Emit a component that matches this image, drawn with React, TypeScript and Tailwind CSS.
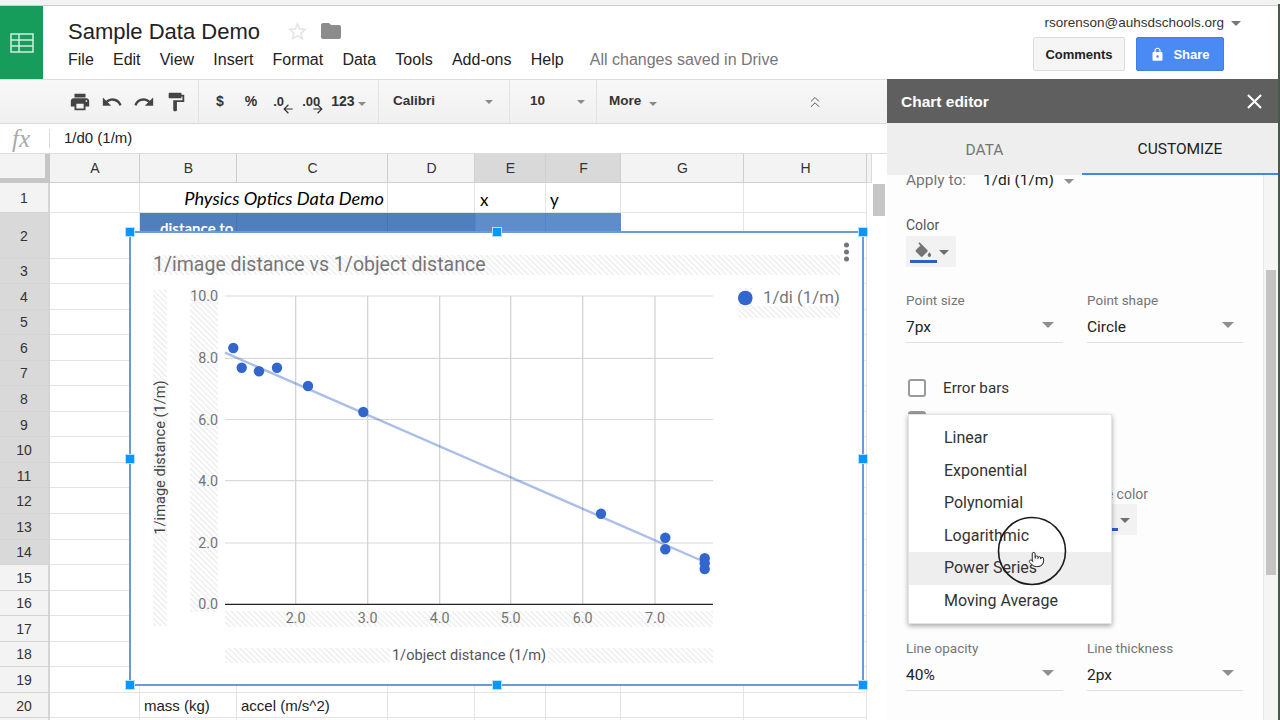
import { MdPrint, MdUndo, MdRedo, MdFormatPaint, MdLock, MdClose, MdStarBorder, MdFolder, MdArrowBack, MdArrowForward } from 'react-icons/md'
import { ChevronsUp, Pointer } from 'lucide-react'

const columns = ['A', 'B', 'C', 'D', 'E', 'F', 'G', 'H']
const rowNumbers = Array.from({ length: 21 }, (_, i) => i + 1)

const points = [
  [233.3, 348], [241.7, 367.7], [259, 371.3], [277, 367.7], [308, 386], [363.3, 412],
  [601, 513.7], [665.3, 537.7], [665.3, 549.3], [704.7, 558.3], [704.7, 563.3], [704.7, 569],
]
const yTicks = [['10.0', 296], ['8.0', 358.3], ['6.0', 419.5], ['4.0', 480.7], ['2.0', 543]] as const
const xTicks = [['2.0', 295.7], ['3.0', 367.7], ['4.0', 439.7], ['5.0', 510.7], ['6.0', 582.7], ['7.0', 655]] as const
const trendTypes = ['Linear', 'Exponential', 'Polynomial', 'Logarithmic', 'Power Series', 'Moving Average']

function Caret({ color = 'border-t-[#8a8a8a]' }: { color?: string }) {
  return <span className={`inline-block w-0 h-0 border-x-[4px] border-t-[4px] border-x-transparent ${color}`} />
}

function Select({ label, value }: { label: string; value: string }) {
  return (
    <div>
      <div className="text-[13.5px] leading-4 text-[#757575]">{label}</div>
      <div className="mt-[10px] h-[25px] flex items-start justify-between pr-[9px] border-b border-[#e0e0e0] text-[15.5px] leading-[18px] text-[#222]">
        <span>{value}</span>
        <span className="mt-[4px] w-0 h-0 border-x-[6px] border-t-[6px] border-x-transparent border-t-[#8f8f8f]" />
      </div>
    </div>
  )
}

function Handle({ pos }: { pos: string }) {
  return <div className={`absolute w-[10px] h-[10px] bg-[#0a96ff] border border-white/70 ${pos}`} />
}

function Chart() {
  return (
    <div className="absolute left-[129px] top-[77px] w-[735px] h-[455px] bg-white border-2 border-[#6a9bd8] font-['Roboto',sans-serif]">
      <svg width="731" height="451" viewBox="131 233 731 451" className="block">
        <defs>
          <pattern id="hatch" width="4" height="4" patternUnits="userSpaceOnUse" patternTransform="rotate(45)">
            <rect width="4" height="1.3" fill="#ebebeb" />
          </pattern>
        </defs>
        <rect x="153" y="255" width="687" height="20" fill="url(#hatch)" />
        <rect x="153" y="290" width="14" height="336" fill="url(#hatch)" />
        <rect x="190" y="290" width="28" height="322" fill="url(#hatch)" />
        <rect x="225" y="611" width="488" height="16" fill="url(#hatch)" />
        <rect x="225" y="648" width="488" height="15" fill="url(#hatch)" />
        <rect x="738" y="288" width="102" height="30" fill="url(#hatch)" />
        <rect x="390" y="646" width="158" height="19" fill="#fff" />
        <rect x="752" y="288" width="88" height="18" fill="#fff" />
        <text x="153" y="271" fontSize="19.5" fill="#757575">1/image distance vs 1/object distance</text>

        {yTicks.map(([t, y]) => (
          <g key={t}>
            <line x1="225" x2="713" y1={y} y2={y} stroke="#d9d9d9" strokeWidth="1.2" />
            <text x="218" y={y + 5} fontSize="14.3" fill="#757575" textAnchor="end">{t}</text>
          </g>
        ))}
        {xTicks.map(([t, x]) => (
          <g key={t}>
            <line x1={x} x2={x} y1="296" y2="604" stroke="#d0d0d0" strokeWidth="1.2" />
            <text x={x} y="623" fontSize="14.3" fill="#757575" textAnchor="middle">{t}</text>
          </g>
        ))}
        <text x="218" y="609" fontSize="14.3" fill="#757575" textAnchor="end">0.0</text>
        <line x1="225" x2="713" y1="604.3" y2="604.3" stroke="#222" strokeWidth="1.2" />

        <line x1="225" y1="352.7" x2="704.7" y2="562" stroke="#3366cc" strokeOpacity="0.42" strokeWidth="2.4" />
        {points.map(([x, y], i) => (
          <circle key={i} cx={x} cy={y} r="5.2" fill="#3366cc" />
        ))}

        <text transform="translate(165 457.5) rotate(-90)" fontSize="14.6" fill="#444" textAnchor="middle">1/image distance (1/m)</text>
        <text x="469" y="660" fontSize="14.6" fill="#555" textAnchor="middle">1/object distance (1/m)</text>

        <circle cx="745.3" cy="298" r="7.3" fill="#3366cc" />
        <text x="763" y="303" fontSize="16.8" fill="#757575">1/di (1/m)</text>

        <circle cx="846.5" cy="245" r="2.5" fill="#757575" />
        <circle cx="846.5" cy="252" r="2.5" fill="#757575" />
        <circle cx="846.5" cy="259" r="2.5" fill="#757575" />
      </svg>
      <Handle pos="-left-[6px] -top-[6px]" />
      <Handle pos="left-[361px] -top-[6px]" />
      <Handle pos="-right-[6px] -top-[6px]" />
      <Handle pos="-left-[6px] top-[221px]" />
      <Handle pos="-right-[6px] top-[221px]" />
      <Handle pos="-left-[6px] -bottom-[6px]" />
      <Handle pos="left-[361px] -bottom-[6px]" />
      <Handle pos="-right-[6px] -bottom-[6px]" />
    </div>
  )
}

function Sheet() {
  return (
    <div className="relative flex-1 flex overflow-visible">
      <div className="w-[867px] h-[566px] overflow-hidden grid grid-cols-[50px_90px_97px_151px_87px_71px_75px_123px_123px] grid-rows-[29px_29.5px_46px_repeat(19,25.55px)] text-[14px] text-[#333]">
        <div className="bg-[#f3f3f3] border-r-[5px] border-b-[5px] border-[#c6c6c6]" />
        {columns.map((c) => (
          <div
            key={c}
            className={`flex items-center justify-center pl-px border-r border-b border-[#cfcfcf] ${c === 'E' || c === 'F' ? 'bg-[#d9d9d9]' : 'bg-[#f3f3f3]'}`}
          >
            {c}
          </div>
        ))}
        {rowNumbers.map((n) => (
          <Row key={n} n={n} />
        ))}
      </div>
      <div className="w-[20px] flex">
        <div className="w-[5px] h-[29px] bg-[#f3f3f3] border-b border-r border-[#dcdcdc]" />
        <div className="ml-[1px] mt-[30px] w-[12px] h-[32px] bg-[#c6c6c6]" />
      </div>
      <Chart />
    </div>
  )
}

function Row({ n }: { n: number }) {
  const rowHead = n >= 2 && n <= 14 ? 'bg-[#d9d9d9]' : 'bg-[#f3f3f3]'
  const cell = 'border-r border-b border-[#e4e4e4] bg-white'
  return (
    <>
      <div className={`flex items-center justify-center pt-[2px] border-r-2 border-b border-[#d4d4d4] ${rowHead}`}>{n < 21 ? n : ''}</div>
      {n === 1 && (
        <>
          <div className={cell} />
          <div className={`${cell} col-span-2 flex items-center justify-end pt-[3px] pr-[3px] font-['Lato',sans-serif] italic text-[18.2px] text-black`}>
            Physics Optics Data Demo
          </div>
          <div className={cell} />
          <div className={`${cell} pl-[5px] pt-[4px] flex items-center font-['Lato',sans-serif] text-[17px] text-black`}>x</div>
          <div className={`${cell} pl-[4px] pt-[4px] flex items-center font-['Lato',sans-serif] text-[17px] text-black`}>y</div>
          <div className={cell} />
          <div className={cell} />
        </>
      )}
      {n === 2 && (
        <>
          <div className={cell} />
          <div className="relative bg-[#4f7fbd] border-r border-[#4773ad]">
            <span className="absolute left-[20px] top-[4px] whitespace-nowrap font-['Lato',sans-serif] font-bold text-[15px] text-white">distance to</span>
          </div>
          <div className="bg-[#4f7fbd] border-r border-[#4773ad]" />
          <div className="bg-[#4f7fbd]" />
          <div className="bg-[#5f8dca] border-x border-[#4f85d8]" />
          <div className="bg-[#5f8dca]" />
          <div className={cell} />
          <div className={cell} />
        </>
      )}
      {n > 2 &&
        columns.map((c) => (
          <div key={c} className={`${cell} flex items-center pl-[4px] pt-[2px] text-[15px] text-[#222] whitespace-nowrap`}>
            {n === 20 && c === 'B' && 'mass (kg)'}
            {n === 20 && c === 'C' && 'accel (m/s^2)'}
          </div>
        ))}
    </>
  )
}

function Toolbar() {
  return (
    <div className="h-[44px] shrink-0 flex bg-gradient-to-b from-[#f8f8f8] to-[#f0f0f0] border-b border-[#dadada] text-[13px] font-bold text-[#333]">
      <div className="w-[199px] pl-[69px] flex items-center gap-[10px] border-r border-[#e2e2e2] text-[#444]">
        <MdPrint size={22} />
        <MdUndo size={22} />
        <MdRedo size={22} />
        <MdFormatPaint size={22} />
      </div>
      <div className="w-[180px] flex items-center border-r border-[#e2e2e2]">
        <span className="ml-[17px] text-[14px]">$</span>
        <span className="ml-[21px] text-[14px]">%</span>
        <span className="relative ml-[16px] w-[22px] leading-none">
          .0
          <MdArrowBack size={14} className="absolute left-[8px] top-[7px]" />
        </span>
        <span className="relative ml-[7px] w-[24px] leading-none">
          .00
          <MdArrowForward size={14} className="absolute left-[9px] top-[7px]" />
        </span>
        <span className="ml-[5px] text-[14px]">123</span>
        <span className="ml-[3px]"><Caret /></span>
      </div>
      <div className="w-[131px] flex items-center justify-between pl-[14px] pr-[16px] border-r border-[#e2e2e2]">
        <span className="text-[13.5px]">Calibri</span>
        <Caret />
      </div>
      <div className="w-[87px] flex items-center justify-between pl-[20px] pr-[11px] border-r border-[#e2e2e2]">
        <span className="text-[13.5px]">10</span>
        <Caret />
      </div>
      <div className="flex items-center pl-[12px]">
        <span className="text-[13.5px]">More</span>
        <span className="ml-[8px]"><Caret /></span>
        <ChevronsUp size={18} strokeWidth={1.3} className="ml-[149px] text-[#555]" />
      </div>
    </div>
  )
}

function SideButton() {
  return (
    <div className="relative w-[50px] h-[31px] bg-[#f2f2f2] text-[#757575]">
      <svg width="19" height="16" viewBox="0 0 22 18" fill="currentColor" className="absolute left-[7px] top-[6px]">
        <path d="M16.56 8.94L7.62 0 6.21 1.41l2.38 2.38-5.15 5.15c-.59.59-.59 1.54 0 2.12l5.5 5.5c.29.29.68.44 1.06.44s.77-.15 1.06-.44l5.5-5.5c.59-.58.59-1.53 0-2.12zM19 11.5s-2 2.17-2 3.5c0 1.1.9 2 2 2s2-.9 2-2c0-1.33-2-3.5-2-3.5z" />
      </svg>
      <span className="absolute left-[4px] top-[24px] w-[27px] h-[3px] bg-[#2f5fc4]" />
      <span className="absolute left-[33px] top-[14px] w-0 h-0 border-x-[5px] border-t-[5px] border-x-transparent border-t-[#6f6f6f]" />
    </div>
  )
}

function ChartEditor() {
  return (
    <div className="relative -mt-px w-[391px] flex flex-col font-['Roboto',sans-serif] bg-[#fdfdfd]">
      <div className="h-[44px] shrink-0 bg-[#5f5f5f] flex items-center justify-between pt-px pl-[14px] pr-[11px] text-white">
        <span className="text-[15.5px] font-bold font-['Liberation_Sans',sans-serif]">Chart editor</span>
        <MdClose size={25} />
      </div>
      <div className="relative z-10 h-[52px] shrink-0 bg-[#eeeeee] flex pt-[3px] text-[15.5px]">
        <div className="w-[195px] flex items-center justify-center text-[#757575]">DATA</div>
        <div className="w-[196px] flex items-center justify-center text-[#222] border-b-2 border-[#4285f4]">CUSTOMIZE</div>
      </div>
      <div className="flex-1 flex min-h-0 overflow-hidden">
        <div className="w-[376px] pl-[19px] -mt-[4px]">
          <div className="h-[20px] flex items-center text-[15.5px]">
            <span className="w-[77px] text-[#757575]">Apply to:</span>
            <span className="text-[#222]">1/di (1/m)</span>
            <span className="ml-[10px] w-0 h-0 border-x-[5px] border-t-[5px] border-x-transparent border-t-[#8f8f8f]" />
          </div>
          <div className="mt-[26px] text-[14px] leading-4 text-[#555]">Color</div>
          <div className="mt-[3px]"><SideButton /></div>
          <div className="mt-[25px] grid grid-cols-[157px_156px] gap-x-[24px]">
            <Select label="Point size" value="7px" />
            <Select label="Point shape" value="Circle" />
          </div>
          <div className="mt-[36px] h-[18px] flex items-center gap-[17px] pl-[2px] text-[15.2px] text-[#333]">
            <span className="w-[18px] h-[18px] rounded-[3px] border-2 border-[#9a9a9a] bg-white" />
            Error bars
          </div>
          <div className="mt-[14px] ml-[2px] w-[18px] h-[18px] rounded-[3px] bg-[#9a9a9a]" />
          <div className="mt-[57px] grid grid-cols-[157px_156px] gap-x-[24px]">
            <div />
            <div>
              <div className="text-[14px] leading-4 text-[#757575]">Line color</div>
              <div className="mt-[2px]"><SideButton /></div>
            </div>
          </div>
          <div className="mt-[105px] grid grid-cols-[157px_156px] gap-x-[24px]">
            <Select label="Line opacity" value="40%" />
            <Select label="Line thickness" value="2px" />
          </div>
        </div>
        <div className="w-[15px] border-l border-[#e8e8e8] bg-[#f5f5f5]">
          <div className="ml-[2px] mt-[95px] w-[10px] h-[305px] bg-[#c4c4c4]" />
        </div>
      </div>
      <div className="absolute z-20 left-[21px] top-[335px] w-[204px] h-[210px] pt-[7px] bg-white border border-[#e4e4e4] shadow-[0_2px_5px_rgba(0,0,0,0.35)] text-[16px] text-[#333]">
        {trendTypes.map((t) => (
          <div key={t} className={`h-[32.5px] flex items-center pl-[35px] ${t === 'Power Series' ? 'bg-[#eeeeee]' : ''}`}>
            {t}
          </div>
        ))}
        <svg width="72" height="72" viewBox="0 0 72 72" className="absolute left-[87px] top-[100px]">
          <circle cx="36" cy="36" r="33.5" fill="none" stroke="#1a1a1a" strokeWidth="1.6" />
        </svg>
        <Pointer size={17} strokeWidth={1.4} className="absolute left-[119px] top-[136px] text-[#222] fill-white" />
      </div>
    </div>
  )
}

export default function App() {
  return (
    <div className="relative w-[1280px] h-[720px] overflow-hidden bg-white flex flex-col font-['Liberation_Sans',sans-serif]">
      <div className="h-[6px] shrink-0 bg-[#f2f2f2] border-b border-[#cfcfcf]" />
      <header className="h-[73px] shrink-0 flex">
        <div className="w-[43px] bg-[#169c5b] flex items-center justify-center">
          <svg width="24" height="20" viewBox="0 0 24 20" fill="none" stroke="#cfeee0" strokeWidth="1.5">
            <rect x="1" y="1" width="22" height="18" />
            <path d="M1 7h22M1 13h22M9 1v18" />
          </svg>
        </div>
        <div className="pl-[25px]">
          <div className="mt-[11px] flex items-center h-[28px]">
            <span className="text-[22px] text-[#222]">Sample Data Demo</span>
            <MdStarBorder size={23} className="ml-[26px] text-[#e4e4e4]" />
            <MdFolder size={24} className="ml-[10px] text-[#8c8c8c]" />
          </div>
          <nav className="mt-[3px] flex items-center gap-[19.2px] text-[16px] text-[#222]">
            <span>File</span>
            <span>Edit</span>
            <span>View</span>
            <span>Insert</span>
            <span>Format</span>
            <span>Data</span>
            <span>Tools</span>
            <span>Add-ons</span>
            <span>Help</span>
            <span className="ml-[7px] text-[#777]">All changes saved in Drive</span>
          </nav>
        </div>
        <div className="ml-auto pr-[56px] flex flex-col items-end">
          <div className="mt-[7px] -mr-[17px] flex items-center gap-[7px] text-[13.5px] text-[#333]">
            rsorenson@auhsdschools.org
            <span className="w-0 h-0 border-x-[5px] border-t-[5px] border-x-transparent border-t-[#777]" />
          </div>
          <div className="mt-[4px] flex gap-[11px] text-[13px] font-bold">
            <button className="w-[92px] h-[34px] rounded-[2px] bg-[#f5f5f5] border border-[#dcdcdc] text-[#222]">Comments</button>
            <button className="w-[88px] h-[34px] rounded-[2px] bg-[#4a8af4] border border-[#3f7fe6] text-white flex items-center justify-center gap-[8px]">
              <MdLock size={15} />
              Share
            </button>
          </div>
        </div>
      </header>
      <div className="flex-1 flex min-h-0 border-t border-[#dcdcdc]">
        <div className="w-[887px] flex flex-col">
          <Toolbar />
          <div className="h-[30px] shrink-0 flex items-center border-b border-[#dcdcdc]">
            <span className="w-[50px] pl-[12px] font-['Liberation_Serif',serif] italic text-[25px] text-[#aaa] border-r border-[#dcdcdc] h-[19px] flex items-center">fx</span>
            <span className="ml-[14px] text-[15px] text-[#222]">1/d0 (1/m)</span>
          </div>
          <Sheet />
        </div>
        <ChartEditor />
      </div>
      <div className="absolute right-0 top-[4px] bottom-0 w-[2px] bg-[#4a5a48]" />
    </div>
  )
}
